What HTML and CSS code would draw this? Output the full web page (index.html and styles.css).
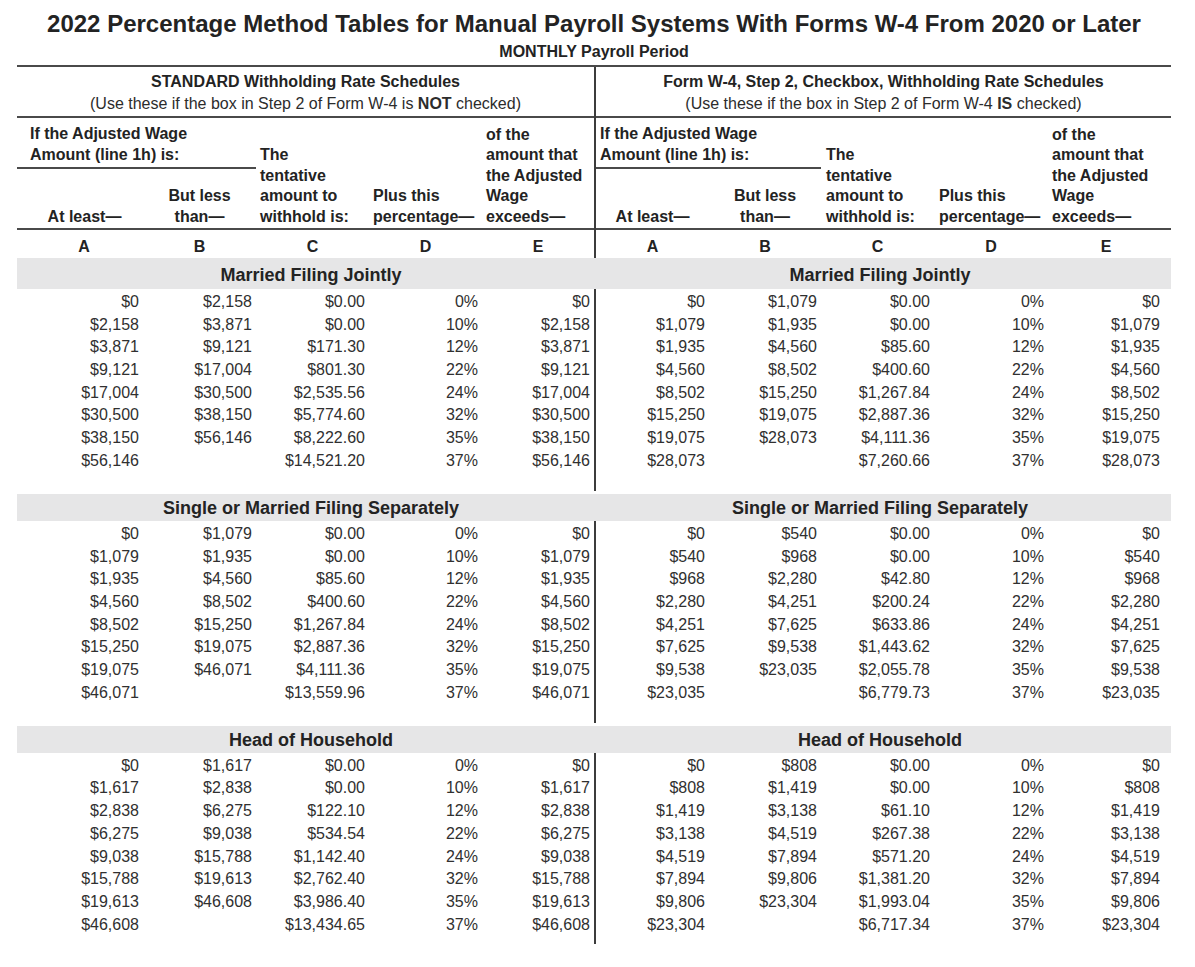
FILE: index.html
```html
<!DOCTYPE html>
<html lang="en">
<head>
<meta charset="utf-8">
<title>2022 Percentage Method Tables</title>
<link rel="stylesheet" href="styles.css">
</head>
<body>
<div class="page">
  <h1 class="title">2022 Percentage Method Tables for Manual Payroll Systems With Forms W-4 From 2020 or Later</h1>
  <div class="period">MONTHLY Payroll Period</div>

  <div class="table">
    <div class="head">
      <div class="half-l">
        <div class="sched">
          <div class="sched-title">STANDARD Withholding Rate Schedules</div>
          <div class="sched-note">(Use these if the box in Step 2 of Form W-4 is <b>NOT</b> checked)</div>
        </div>
        <div class="cols cols-l">
          <div class="h-wage">If the Adjusted Wage<br>Amount (line 1h) is:</div>
          <div class="h-a">At least—</div>
          <div class="h-b">But less<br>than—</div>
          <div class="h-c">The<br>tentative<br>amount to<br>withhold is:</div>
          <div class="h-d">Plus this<br>percentage—</div>
          <div class="h-e">of the<br>amount that<br>the Adjusted<br>Wage<br>exceeds—</div>
        </div>
        <div class="letters letters-l"><span>A</span><span>B</span><span>C</span><span>D</span><span>E</span></div>
      </div>
      <div class="half-r">
        <div class="sched">
          <div class="sched-title">Form W-4, Step 2, Checkbox, Withholding Rate Schedules</div>
          <div class="sched-note">(Use these if the box in Step 2 of Form W-4 <b>IS</b> checked)</div>
        </div>
        <div class="cols cols-r">
          <div class="h-wage">If the Adjusted Wage<br>Amount (line 1h) is:</div>
          <div class="h-a">At least—</div>
          <div class="h-b">But less<br>than—</div>
          <div class="h-c">The<br>tentative<br>amount to<br>withhold is:</div>
          <div class="h-d">Plus this<br>percentage—</div>
          <div class="h-e">of the<br>amount that<br>the Adjusted<br>Wage<br>exceeds—</div>
        </div>
        <div class="letters letters-r"><span>A</span><span>B</span><span>C</span><span>D</span><span>E</span></div>
      </div>
    </div>

    <section class="group">
      <div class="band band-first"><span class="band-l">Married Filing Jointly</span><span class="band-r">Married Filing Jointly</span></div>
      <div class="rows">
        <div class="grid grid-l">
          <span>$0</span><span>$2,158</span><span>$0.00</span><span>0%</span><span>$0</span>
          <span>$2,158</span><span>$3,871</span><span>$0.00</span><span>10%</span><span>$2,158</span>
          <span>$3,871</span><span>$9,121</span><span>$171.30</span><span>12%</span><span>$3,871</span>
          <span>$9,121</span><span>$17,004</span><span>$801.30</span><span>22%</span><span>$9,121</span>
          <span>$17,004</span><span>$30,500</span><span>$2,535.56</span><span>24%</span><span>$17,004</span>
          <span>$30,500</span><span>$38,150</span><span>$5,774.60</span><span>32%</span><span>$30,500</span>
          <span>$38,150</span><span>$56,146</span><span>$8,222.60</span><span>35%</span><span>$38,150</span>
          <span>$56,146</span><span></span><span>$14,521.20</span><span>37%</span><span>$56,146</span>
        </div>
        <div class="grid grid-r">
          <span>$0</span><span>$1,079</span><span>$0.00</span><span>0%</span><span>$0</span>
          <span>$1,079</span><span>$1,935</span><span>$0.00</span><span>10%</span><span>$1,079</span>
          <span>$1,935</span><span>$4,560</span><span>$85.60</span><span>12%</span><span>$1,935</span>
          <span>$4,560</span><span>$8,502</span><span>$400.60</span><span>22%</span><span>$4,560</span>
          <span>$8,502</span><span>$15,250</span><span>$1,267.84</span><span>24%</span><span>$8,502</span>
          <span>$15,250</span><span>$19,075</span><span>$2,887.36</span><span>32%</span><span>$15,250</span>
          <span>$19,075</span><span>$28,073</span><span>$4,111.36</span><span>35%</span><span>$19,075</span>
          <span>$28,073</span><span></span><span>$7,260.66</span><span>37%</span><span>$28,073</span>
        </div>
      </div>
    </section>

    <section class="group">
      <div class="band"><span class="band-l">Single or Married Filing Separately</span><span class="band-r">Single or Married Filing Separately</span></div>
      <div class="rows">
        <div class="grid grid-l">
          <span>$0</span><span>$1,079</span><span>$0.00</span><span>0%</span><span>$0</span>
          <span>$1,079</span><span>$1,935</span><span>$0.00</span><span>10%</span><span>$1,079</span>
          <span>$1,935</span><span>$4,560</span><span>$85.60</span><span>12%</span><span>$1,935</span>
          <span>$4,560</span><span>$8,502</span><span>$400.60</span><span>22%</span><span>$4,560</span>
          <span>$8,502</span><span>$15,250</span><span>$1,267.84</span><span>24%</span><span>$8,502</span>
          <span>$15,250</span><span>$19,075</span><span>$2,887.36</span><span>32%</span><span>$15,250</span>
          <span>$19,075</span><span>$46,071</span><span>$4,111.36</span><span>35%</span><span>$19,075</span>
          <span>$46,071</span><span></span><span>$13,559.96</span><span>37%</span><span>$46,071</span>
        </div>
        <div class="grid grid-r">
          <span>$0</span><span>$540</span><span>$0.00</span><span>0%</span><span>$0</span>
          <span>$540</span><span>$968</span><span>$0.00</span><span>10%</span><span>$540</span>
          <span>$968</span><span>$2,280</span><span>$42.80</span><span>12%</span><span>$968</span>
          <span>$2,280</span><span>$4,251</span><span>$200.24</span><span>22%</span><span>$2,280</span>
          <span>$4,251</span><span>$7,625</span><span>$633.86</span><span>24%</span><span>$4,251</span>
          <span>$7,625</span><span>$9,538</span><span>$1,443.62</span><span>32%</span><span>$7,625</span>
          <span>$9,538</span><span>$23,035</span><span>$2,055.78</span><span>35%</span><span>$9,538</span>
          <span>$23,035</span><span></span><span>$6,779.73</span><span>37%</span><span>$23,035</span>
        </div>
      </div>
    </section>

    <section class="group group-last">
      <div class="band"><span class="band-l">Head of Household</span><span class="band-r">Head of Household</span></div>
      <div class="rows">
        <div class="grid grid-l">
          <span>$0</span><span>$1,617</span><span>$0.00</span><span>0%</span><span>$0</span>
          <span>$1,617</span><span>$2,838</span><span>$0.00</span><span>10%</span><span>$1,617</span>
          <span>$2,838</span><span>$6,275</span><span>$122.10</span><span>12%</span><span>$2,838</span>
          <span>$6,275</span><span>$9,038</span><span>$534.54</span><span>22%</span><span>$6,275</span>
          <span>$9,038</span><span>$15,788</span><span>$1,142.40</span><span>24%</span><span>$9,038</span>
          <span>$15,788</span><span>$19,613</span><span>$2,762.40</span><span>32%</span><span>$15,788</span>
          <span>$19,613</span><span>$46,608</span><span>$3,986.40</span><span>35%</span><span>$19,613</span>
          <span>$46,608</span><span></span><span>$13,434.65</span><span>37%</span><span>$46,608</span>
        </div>
        <div class="grid grid-r">
          <span>$0</span><span>$808</span><span>$0.00</span><span>0%</span><span>$0</span>
          <span>$808</span><span>$1,419</span><span>$0.00</span><span>10%</span><span>$808</span>
          <span>$1,419</span><span>$3,138</span><span>$61.10</span><span>12%</span><span>$1,419</span>
          <span>$3,138</span><span>$4,519</span><span>$267.38</span><span>22%</span><span>$3,138</span>
          <span>$4,519</span><span>$7,894</span><span>$571.20</span><span>24%</span><span>$4,519</span>
          <span>$7,894</span><span>$9,806</span><span>$1,381.20</span><span>32%</span><span>$7,894</span>
          <span>$9,806</span><span>$23,304</span><span>$1,993.04</span><span>35%</span><span>$9,806</span>
          <span>$23,304</span><span></span><span>$6,717.34</span><span>37%</span><span>$23,304</span>
        </div>
      </div>
    </section>
  </div>
</div>
</body>
</html>
```

FILE: styles.css
```css
* {
  box-sizing: border-box;
}

body {
  margin: 0;
  background: #ffffff;
  color: #232323;
  font-family: "Liberation Sans", Arial, sans-serif;
}

.page {
  width: 1154px;
  margin-left: 17px;
  padding-top: 10px;
}

.title {
  margin: 0;
  font-size: 24px;
  line-height: 28px;
  font-weight: bold;
  text-align: center;
  white-space: nowrap;
}

.period {
  margin-top: 4px;
  font-size: 16px;
  line-height: 20px;
  font-weight: bold;
  text-align: center;
}

.table {
  margin-top: 3px;
  border-top: 2px solid #4a4a4a;
}

.head {
  display: flex;
}

.half-l {
  width: 579px;
  border-right: 2px solid #3c3c3c;
}

.half-r {
  width: 575px;
}

.sched {
  height: 51px;
  padding-top: 4px;
  border-bottom: 2px solid #4a4a4a;
  text-align: center;
  font-size: 16px;
  line-height: 22px;
  white-space: nowrap;
}

.sched-title {
  font-weight: bold;
}

.sched-note {
  color: #2c2c2c;
}

.cols {
  display: grid;
  grid-template-rows: 51px 59px;
  border-bottom: 2px solid #4a4a4a;
  font-size: 16px;
  font-weight: bold;
  line-height: 20.5px;
}

.cols-l {
  grid-template-columns: 126px 113px 113px 113px 112px;
}

.cols-r {
  grid-template-columns: 113px 112px 113px 114px 123px;
}

.h-wage {
  grid-column: 1 / 3;
  grid-row: 1;
  padding-top: 6px;
  border-bottom: 2px solid #4a4a4a;
  white-space: nowrap;
}

.cols-l .h-wage {
  padding-left: 13px;
}

.cols-r .h-wage {
  padding-left: 4px;
}

.h-a,
.h-b {
  grid-row: 2;
  align-self: end;
  padding-bottom: 1px;
  text-align: center;
  white-space: nowrap;
}

.h-a {
  grid-column: 1;
}

.h-b {
  grid-column: 2;
}

.cols-l .h-a {
  padding-left: 9px;
}

.h-c,
.h-d,
.h-e {
  grid-row: 1 / 3;
  align-self: end;
  padding-bottom: 1px;
  padding-left: 4px;
  white-space: nowrap;
}

.h-c {
  grid-column: 3;
}

.h-d {
  grid-column: 4;
}

.h-e {
  grid-column: 5;
}

.cols-r .h-c,
.cols-r .h-d {
  padding-left: 5px;
}

.letters {
  display: grid;
  height: 28px;
  padding-top: 6px;
  font-size: 16px;
  font-weight: bold;
  line-height: 22px;
  text-align: center;
}

.letters-l {
  grid-template-columns: 126px 113px 113px 113px 112px;
}

.letters-l span:first-child {
  padding-left: 8px;
}

.letters-r {
  grid-template-columns: 113px 112px 113px 114px 123px;
}

.letters-r span:last-child {
  padding-right: 7px;
}

.band {
  display: grid;
  grid-template-columns: 579px 575px;
  background: #e6e6e7;
  font-size: 18px;
  font-weight: bold;
  text-align: center;
  padding-top: 2px;
  line-height: 25px;
  white-space: nowrap;
}

.band-first {
  padding-top: 3px;
  line-height: 28px;
}

.band-l {
  padding-left: 9px;
}

.band-r {
  padding-right: 7px;
}

.group {
  margin-bottom: 3px;
}

.rows {
  display: flex;
}

.grid {
  display: grid;
  grid-auto-rows: 22.7px;
  padding-bottom: 20.4px;
  font-size: 16px;
  color: #303030;
  text-align: right;
}

.group-last {
  margin-bottom: 0;
}

.group-last .grid {
  padding-bottom: 9.4px;
}

.grid span {
  padding-top: 3px;
  padding-right: 4px;
  line-height: 19.7px;
  white-space: nowrap;
}

.grid-l {
  width: 579px;
  grid-template-columns: 126px 113px 113px 113px 112px;
  border-right: 2px solid #3c3c3c;
}

.grid-r {
  width: 575px;
  grid-template-columns: 113px 112px 113px 114px 123px;
}

.grid-r span:nth-child(5n) {
  padding-right: 11px;
}
```
